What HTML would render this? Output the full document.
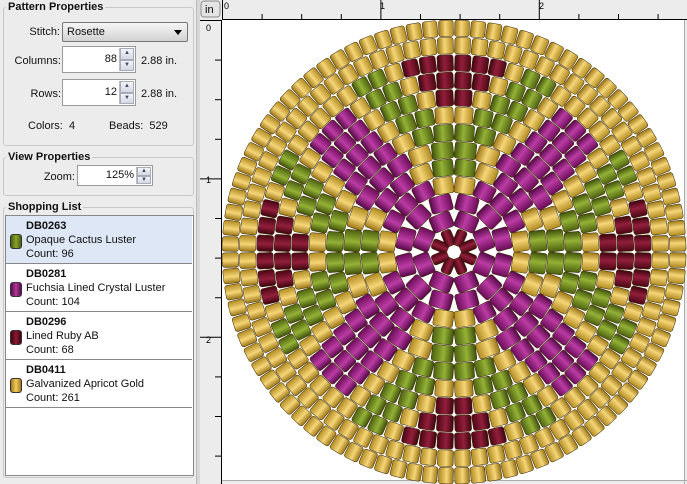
<!DOCTYPE html>
<html><head><meta charset="utf-8"><style>
*{box-sizing:border-box;margin:0;padding:0}
body{width:687px;height:484px;overflow:hidden;background:#ececec;font-family:"Liberation Sans",Arial,sans-serif;font-size:11px;color:#111;position:relative}
.grp{position:absolute;left:3px;width:191px;border:1px solid #c8c8c8;border-radius:3px}
.gt{position:absolute;font-weight:bold;font-size:11px;background:#ececec;padding:0 2px;left:4px}
.lbl{position:absolute;text-align:right}
.inp{position:absolute;background:#fff;border:1px solid #9a9a9a;text-align:right;padding-right:18px}
.spin{position:absolute;right:1px;top:1px;bottom:1px;width:15px;border-left:1px solid #bbb}
.spin div{height:50%;background:linear-gradient(#f4f4f8,#d4d8e4);border:1px solid #a8acb8;font-size:6px;line-height:8px;text-align:center;color:#446}
.item{position:absolute;left:6px;width:186px;height:48px;border-bottom:1px solid #888;padding-left:20px;line-height:14px;padding-top:3px}
.sw{position:absolute;left:4px;top:18px;width:12px;height:15px;border-radius:3px;border:1px solid #333}
</style></head><body>
<div style="position:absolute;left:196px;top:0;width:4px;height:484px;background:#d8d8d8;border-left:1px solid #bbb"></div>

<div class="grp" style="top:7px;height:139px"></div>
<div class="gt" style="top:1px;left:6px">Pattern Properties</div>
<div class="lbl" style="left:10px;width:50px;top:26px">Stitch:</div>
<div style="position:absolute;left:62px;top:22px;width:126px;height:20px;border:1px solid #777;border-radius:2px;background:linear-gradient(#f6f6f6,#d2d2d2);padding:3px 4px">Rosette<span style="position:absolute;right:5px;top:7px;border:4px solid transparent;border-top:5px solid #000"></span></div>
<div class="lbl" style="left:5px;width:56px;top:55px">Columns:</div>
<div class="inp" style="left:62px;top:46px;width:74px;height:27px;line-height:25px">88<div class="spin"><div>▲</div><div>▼</div></div></div>
<div style="position:absolute;left:141px;top:55px">2.88 in.</div>
<div class="lbl" style="left:5px;width:56px;top:88px">Rows:</div>
<div class="inp" style="left:62px;top:79px;width:74px;height:27px;line-height:25px">12<div class="spin"><div>▲</div><div>▼</div></div></div>
<div style="position:absolute;left:141px;top:88px">2.88 in.</div>
<div style="position:absolute;left:28px;top:120px">Colors:&nbsp; 4</div>
<div style="position:absolute;left:109px;top:120px">Beads:&nbsp; 529</div>

<div class="grp" style="top:157px;height:39px"></div>
<div class="gt" style="top:151px;left:6px">View Properties</div>
<div class="lbl" style="left:20px;width:55px;top:171px">Zoom:</div>
<div class="inp" style="left:77px;top:165px;width:76px;height:21px;line-height:19px">125%<div class="spin"><div style="line-height:7px">▲</div><div style="line-height:7px">▼</div></div></div>

<div class="grp" style="top:207px;height:271px"></div>
<div class="gt" style="top:201px;left:6px">Shopping List</div>
<div style="position:absolute;left:5px;top:215px;width:189px;height:261px;background:#fff;border:1px solid #888"></div>
<div class="item" style="top:216px;background:#dde7f6"><b>DB0263</b><br>Opaque Cactus Luster<br>Count: 96<div class="sw" style="background:linear-gradient(90deg,#4a5c0e,#8aa42a,#4a5c0e)"></div></div>
<div class="item" style="top:264px"><b>DB0281</b><br>Fuchsia Lined Crystal Luster<br>Count: 104<div class="sw" style="background:linear-gradient(90deg,#5c0a4c,#b03898,#5c0a4c)"></div></div>
<div class="item" style="top:312px"><b>DB0296</b><br>Lined Ruby AB<br>Count: 68<div class="sw" style="background:linear-gradient(90deg,#420410,#8a1a34,#420410)"></div></div>
<div class="item" style="top:360px"><b>DB0411</b><br>Galvanized Apricot Gold<br>Count: 261<div class="sw" style="background:linear-gradient(90deg,#a07818,#f0cc60,#a07818)"></div></div>

<svg id="cv" style="position:absolute;left:200px;top:0" width="487" height="484" xmlns="http://www.w3.org/2000/svg">
<defs>
<linearGradient id="gY"><stop offset="0" stop-color="#9a7414"/><stop offset=".45" stop-color="#f6d678"/><stop offset="1" stop-color="#b08a20"/></linearGradient>
<linearGradient id="gG"><stop offset="0" stop-color="#3e500a"/><stop offset=".45" stop-color="#94b236"/><stop offset="1" stop-color="#4c6010"/></linearGradient>
<linearGradient id="gP"><stop offset="0" stop-color="#560848"/><stop offset=".45" stop-color="#bc3ca4"/><stop offset="1" stop-color="#6a0c58"/></linearGradient>
<linearGradient id="gR"><stop offset="0" stop-color="#3c040e"/><stop offset=".45" stop-color="#921f3c"/><stop offset="1" stop-color="#4a0614"/></linearGradient>
</defs>
<rect x="0" y="0" width="487" height="484" fill="#ececec"/>
<rect x="22" y="20" width="462" height="460" fill="#fff"/>
<rect x="1" y="1" width="19" height="16" rx="3" fill="#e4e4e4" stroke="#888"/>
<text x="5" y="13" font-size="11" font-family="Liberation Sans">in</text>
<line x1="22" y1="19.5" x2="487" y2="19.5" stroke="#000"/>
<line x1="21.5" y1="20" x2="21.5" y2="484" stroke="#000"/>
<line x1="484.5" y1="20" x2="484.5" y2="484" stroke="#aaa"/>
<line x1="22" y1="480.5" x2="487" y2="480.5" stroke="#aaa"/>
<g id="ticks" stroke="#000"></g>
<g font-size="9" font-family="Liberation Sans">
<text x="24" y="9">0</text><text x="180" y="9">1</text><text x="339" y="9">2</text>
<text x="6" y="31">0</text><text x="6" y="183">1</text><text x="6" y="343">2</text>
</g>
<g id="beads"></g>
</svg>
<script>
(function(){
var ns="http://www.w3.org/2000/svg";
var t=document.getElementById("ticks");
function ln(a,b,c,d){var l=document.createElementNS(ns,"line");l.setAttribute("x1",a);l.setAttribute("y1",b);l.setAttribute("x2",c);l.setAttribute("y2",d);t.appendChild(l);}
for(var i=0;i<12;i++){var x=22.5+i*39.6;ln(x,i%4==0?0:14,x,19);var y=20.5+i*39.6;if(y<480)ln(i%4==0?0:15,y,21,y);}
var g=document.getElementById("beads");
var cx=254,cy=252,step=17.4;
function col(r,th){
 if(r<20)return "R";
 if(r>215)return "Y";
 var a=((th%(Math.PI/2))+Math.PI/2)%(Math.PI/2);
 var psi=Math.abs(a-Math.PI/4);
 var d=r*Math.sin(psi);
 if(d<30&&r<172)return "P";
 if(d<45)return "Y";
 if(d<80&&r<200)return "G";
 if(d<95)return "Y";
 if(d<136&&r<206)return "R";
 return "Y";
}
for(var k=0;k<=12;k++){
 var r=15+k*step;
 var bw=16+10*(1-k/12);
 var n=k==0?8:Math.round(2*Math.PI*r/bw);
 if(k>0)n=Math.max(8,Math.round(n/4)*4);
 var w=Math.min(2*Math.PI*r/n-1.3,22);
 var h=16.4;
 for(var j=0;j<n;j++){
  var th=(j+0.5)*2*Math.PI/n;
  var x=cx+r*Math.cos(th),y=cy+r*Math.sin(th);
  var c=col(r,th);
  var e=document.createElementNS(ns,"rect");
  e.setAttribute("x",-w/2);e.setAttribute("y",-h/2);e.setAttribute("width",w);e.setAttribute("height",h);
  e.setAttribute("rx",2.5);
  e.setAttribute("fill","url(#g"+c+")");
  e.setAttribute("stroke","#3a2800");e.setAttribute("stroke-width","0.5");
  e.setAttribute("transform","translate("+x.toFixed(2)+","+y.toFixed(2)+") rotate("+(th*180/Math.PI+90).toFixed(2)+")");
  g.appendChild(e);
 }
}
})();
</script>
</body></html>
